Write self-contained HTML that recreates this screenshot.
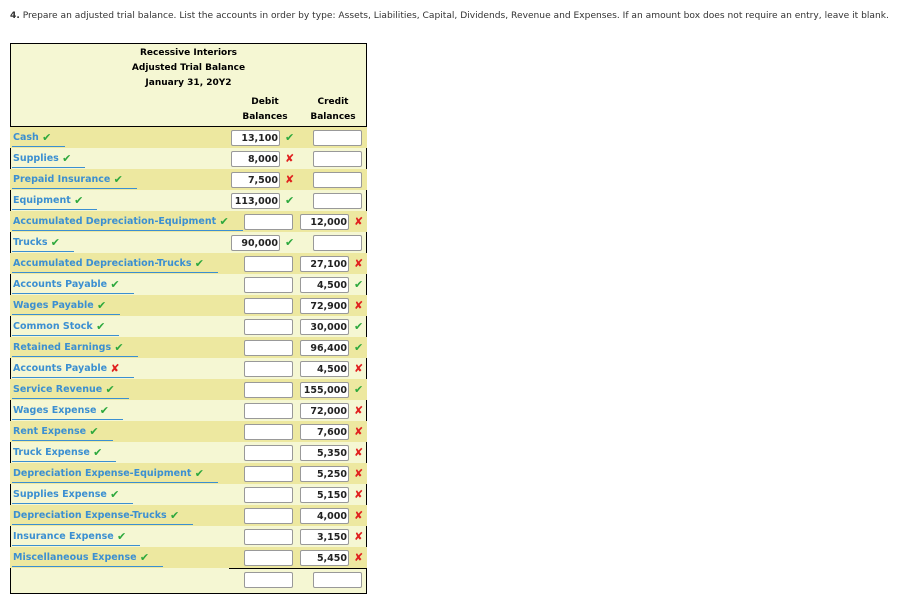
<!DOCTYPE html>
<html><head><meta charset="utf-8"><style>
body{margin:0;width:924px;height:596px;background:#fff;font-family:"DejaVu Sans",Verdana,sans-serif;position:relative;overflow:hidden}
.q{position:absolute;left:10px;top:11px;font-size:9.1px;color:#333;white-space:nowrap}
.hd{position:absolute;left:10px;top:43px;width:355px;height:49px;border:1px solid #000;background:#f5f7d3;text-align:center;font-weight:bold;font-size:9px;line-height:15px;padding-top:2px;box-sizing:content-box}
.ch{position:absolute;left:10px;top:93px;width:355px;height:33px;border:1px solid #000;border-top:none;background:#f5f7d3;font-weight:bold;font-size:9px;line-height:15px}
.ch div{position:absolute;top:2px;text-align:center;width:68px}
.r{position:absolute;left:10px;width:357px;height:21px}
.d{background:#ede8a0}
.l{background:#f5f7d3;box-shadow:inset 1px 0 0 #000,inset -1px 0 0 #000}
.lab{position:absolute;left:2px;top:5px;height:12px;line-height:12px;font-size:9.5px;font-weight:bold;color:#3b8fd1;white-space:nowrap;border-bottom:1px solid #3b8fd1;padding:0 14px 2px 1px}
.ok,.no{display:inline-block;line-height:12px;height:12px;vertical-align:top}
.ok{color:#2ca83c;font-size:11px}
.no{color:#e0201e;font-size:11px}
.in{position:absolute;top:3px;width:46px;height:14px;border:1px solid #999;border-radius:2px;background:#fff;font-size:9.5px;font-weight:bold;text-align:right;line-height:15px;padding-right:1px;box-sizing:content-box;color:#222;overflow:hidden;white-space:nowrap}
.m{position:absolute;top:5px;height:12px;line-height:12px;font-weight:bold}
</style></head><body>
<div class="q"><b>4.</b> Prepare an adjusted trial balance. List the accounts in order by type: Assets, Liabilities, Capital, Dividends, Revenue and Expenses. If an amount box does not require an entry, leave it blank.</div>
<div class="hd">Recessive Interiors<br>Adjusted Trial Balance<br>January 31, 20Y2</div>
<div class="ch"><div style="left:220px">Debit<br>Balances</div><div style="left:288px">Credit<br>Balances</div></div>
<div id="rows"></div>
<script>
var R=[["Cash",1,"13,100",1,"",0],["Supplies",1,"8,000",2,"",0],["Prepaid Insurance",1,"7,500",2,"",0],["Equipment",1,"113,000",1,"",0],["Accumulated Depreciation-Equipment",1,"",0,"12,000",2],["Trucks",1,"90,000",1,"",0],["Accumulated Depreciation-Trucks",1,"",0,"27,100",2],["Accounts Payable",1,"",0,"4,500",1],["Wages Payable",1,"",0,"72,900",2],["Common Stock",1,"",0,"30,000",1],["Retained Earnings",1,"",0,"96,400",1],["Accounts Payable",2,"",0,"4,500",2],["Service Revenue",1,"",0,"155,000",1],["Wages Expense",1,"",0,"72,000",2],["Rent Expense",1,"",0,"7,600",2],["Truck Expense",1,"",0,"5,350",2],["Depreciation Expense-Equipment",1,"",0,"5,250",2],["Supplies Expense",1,"",0,"5,150",2],["Depreciation Expense-Trucks",1,"",0,"4,000",2],["Insurance Expense",1,"",0,"3,150",2],["Miscellaneous Expense",1,"",0,"5,450",2]];
function mk(t){return t==1?'<span class="ok">✔</span>':'<span class="no">✘</span>'}
var h="";
R.forEach(function(r,i){
 var y=127+i*21;
 h+='<div class="r '+(i%2?'l':'d')+'" style="top:'+y+'px">';
 h+='<div class="lab">'+r[0]+' '+mk(r[1])+'</div>';
 var dx=r[3]?221:234; h+='<div class="in" style="left:'+dx+'px">'+r[2]+'</div>';
 if(r[3])h+='<div class="m" style="left:275px">'+mk(r[3])+'</div>';
 var cx=r[5]?290:303; h+='<div class="in" style="left:'+cx+'px">'+r[4]+'</div>';
 if(r[5])h+='<div class="m" style="left:344px">'+mk(r[5])+'</div>';
 h+='</div>';
});
h+='<div class="r l" style="top:568px;height:25px;border-bottom:1px solid #000"><div style="position:absolute;left:219px;top:0;width:137px;border-top:1px solid #000"></div><div class="in" style="left:234px;top:4px"></div><div class="in" style="left:303px;top:4px"></div></div>';
document.getElementById("rows").innerHTML=h;
</script>
</body></html>
